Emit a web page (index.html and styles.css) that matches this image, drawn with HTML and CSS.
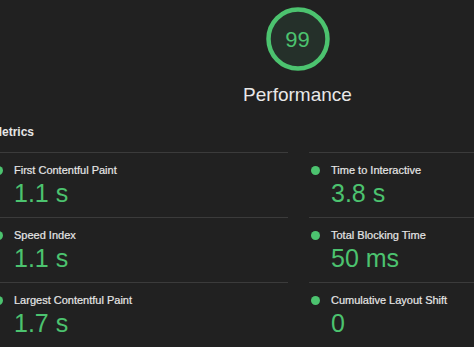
FILE: index.html
```html
<!DOCTYPE html>
<html lang="en">
<head>
<meta charset="utf-8">
<title>Performance</title>
<link rel="stylesheet" href="styles.css">
</head>
<body>
<main class="report">
  <section class="gauge">
    <div class="gauge-ring">
      <svg width="64" height="64" viewBox="0 0 64 64" aria-hidden="true">
        <circle cx="32" cy="32" r="29.5" fill="#25302a" stroke="#4cc36f" stroke-width="4.5"/>
      </svg>
      <span class="gauge-score">99</span>
    </div>
    <div class="gauge-title">Performance</div>
  </section>
  <section class="metrics">
    <h2 class="metrics-title">Metrics</h2>
    <div class="metrics-grid">
      <div class="metric"><span class="dot"></span><div class="metric-body"><div class="metric-label">First Contentful Paint</div><div class="metric-value">1.1 s</div></div></div>
      <div class="metric"><span class="dot"></span><div class="metric-body"><div class="metric-label">Time to Interactive</div><div class="metric-value">3.8 s</div></div></div>
      <div class="metric"><span class="dot"></span><div class="metric-body"><div class="metric-label">Speed Index</div><div class="metric-value">1.1 s</div></div></div>
      <div class="metric"><span class="dot"></span><div class="metric-body"><div class="metric-label">Total Blocking Time</div><div class="metric-value">50 ms</div></div></div>
      <div class="metric"><span class="dot"></span><div class="metric-body"><div class="metric-label">Largest Contentful Paint</div><div class="metric-value">1.7 s</div></div></div>
      <div class="metric"><span class="dot"></span><div class="metric-body"><div class="metric-label">Cumulative Layout Shift</div><div class="metric-value">0</div></div></div>
    </div>
  </section>
</main>
</body>
</html>
```

FILE: styles.css
```css
html, body {
  margin: 0;
  padding: 0;
  background: #212121;
  overflow: hidden;
  width: 474px;
  height: 347px;
}

body {
  font-family: "Liberation Sans", Arial, sans-serif;
  color: #e4e4e4;
}

.report {
  margin-left: -8px;
  width: 613px;
}

.gauge {
  display: flex;
  flex-direction: column;
  align-items: center;
  padding-top: 7px;
  padding-right: 2px;
}

.gauge-ring {
  position: relative;
  width: 64px;
  height: 64px;
}

.gauge-ring svg {
  display: block;
}

.gauge-score {
  position: absolute;
  inset: 0;
  display: flex;
  align-items: center;
  justify-content: center;
  font-size: 22px;
  color: #4cc36f;
  padding-top: 1px;
}

.gauge-title {
  margin-top: 13px;
  font-size: 19px;
  line-height: 22px;
  color: #e8e8e8;
}

.metrics-title {
  margin: 19px 0 13px;
  font-size: 12px;
  line-height: 14px;
  font-weight: bold;
  color: #e6e6e6;
}

.metrics-grid {
  display: grid;
  grid-template-columns: 296px 296px;
  column-gap: 21px;
}

.metric {
  display: flex;
  align-items: flex-start;
  border-top: 1px solid #3b3b3b;
  padding: 10px 0 10px 2px;
  height: 44px;
}

.dot {
  width: 9px;
  height: 9px;
  border-radius: 50%;
  background: #4cc36f;
  margin-top: 2.5px;
  margin-right: 11px;
  flex: none;
}

.metric-label {
  font-size: 11px;
  line-height: 14px;
  color: #e6e6e6;
  -webkit-text-stroke: 0.2px #e6e6e6;
}

.metric-value {
  margin-top: 2px;
  font-size: 25px;
  line-height: 28px;
  color: #4cc36f;
}
```
